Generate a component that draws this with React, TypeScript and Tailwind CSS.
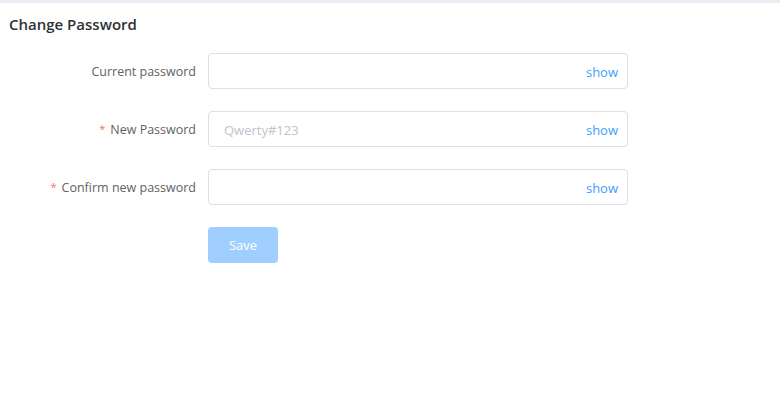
import { useState } from "react";

const font = { fontFamily: '"Open Sans", "Noto Sans", sans-serif' };

function PasswordField({
  label,
  required,
  placeholder,
}: {
  label: string;
  required?: boolean;
  placeholder?: string;
}) {
  const [visible, setVisible] = useState(false);
  return (
    <div className="flex items-center mb-[22px]">
      <label className="w-[200px] shrink-0 pr-3 pt-[2px] text-right text-[12.5px] text-[#606266]">
        {required && (
          <span className="mr-[5px] align-[1px] text-[11px] text-[#f56c6c]">*</span>
        )}
        {label}
      </label>
      <div className="relative w-[420px]">
        <input
          type={visible ? "text" : "password"}
          placeholder={placeholder}
          className="h-9 w-full rounded border border-[#dcdfe6] bg-white pl-[15px] pr-12 pt-px text-[13px] text-[#606266] outline-none placeholder:text-[#c0c4cc]"
          style={font}
        />
        <button
          type="button"
          onClick={() => setVisible(!visible)}
          className="absolute right-[10px] top-[9px] text-[13px] leading-5 text-[#409eff]"
          style={font}
        >
          show
        </button>
      </div>
    </div>
  );
}

export default function App() {
  return (
    <div className="min-h-[401px] bg-white" style={font}>
      <div className="h-[3px] bg-[#e9ecf2]" />
      <div className="px-2">
        <h2 className="pl-px pt-[9px] text-[15px] font-semibold leading-6 text-[#2f3136]">
          Change Password
        </h2>
        <form className="mt-[17px]">
          <PasswordField label="Current password" />
          <PasswordField label="New Password" required placeholder="Qwerty#123" />
          <PasswordField label="Confirm new password" required />
          <div className="pl-[200px]">
            <button
              type="button"
              disabled
              className="h-9 w-[70px] rounded bg-[#a0cfff] pt-px text-[13px] text-white"
            >
              Save
            </button>
          </div>
        </form>
      </div>
    </div>
  );
}
